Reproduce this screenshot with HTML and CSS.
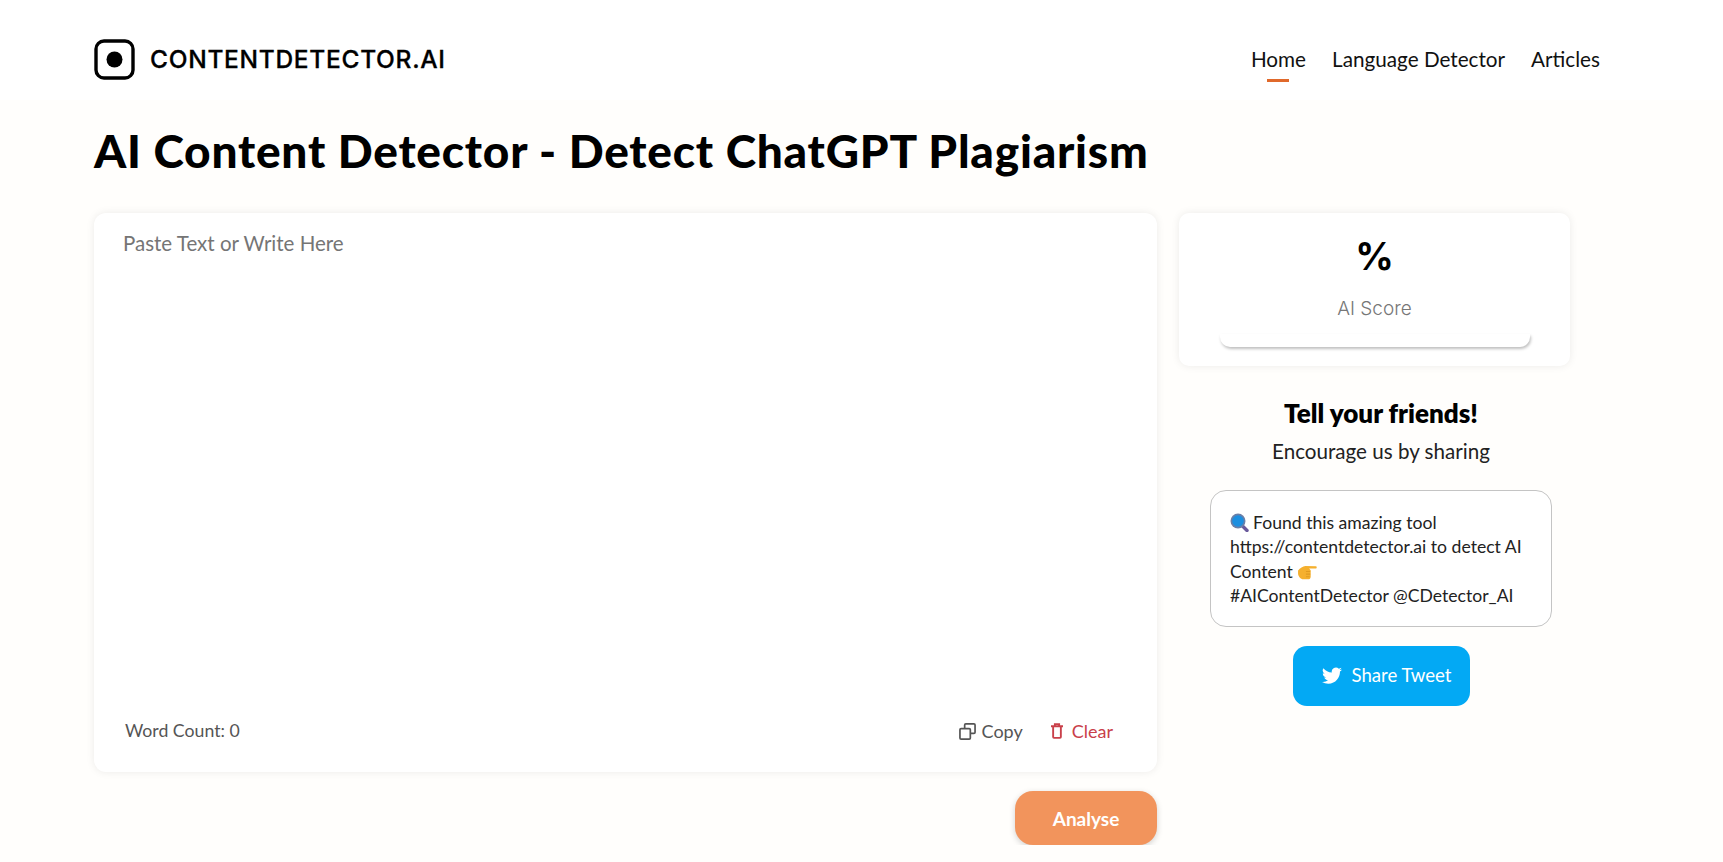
FILE: index.html
```html
<!DOCTYPE html>
<html lang="en">
<head>
  <meta charset="UTF-8" />
  <meta name="viewport" content="width=device-width, initial-scale=1.0"/>
  <title>AI Content Detector</title>
  <link rel="stylesheet" href="styles.css">
</head>
<body>

  <!-- Header -->
  <div class="header">
    <a class="logo" href="#">
      <svg class="logo-icon" width="41" height="41" viewBox="0 0 41 41">
        <rect x="2" y="2" width="37" height="37" rx="8" fill="none" stroke="#000" stroke-width="3.4"/>
        <circle cx="20.5" cy="20.5" r="8"/>
      </svg>
      <span class="logo-text">CONTENTDETECTOR.AI</span>
    </a>
    <div class="nav">
      <a class="nav-link active" href="#">Home</a>
      <a class="nav-link" href="#">Language Detector</a>
      <a class="nav-link" href="#">Articles</a>
    </div>
  </div>

  <div class="page">
    <h1 class="page-title">AI Content Detector - Detect ChatGPT Plagiarism</h1>

    <div class="columns">
      <!-- Editor -->
      <div class="left-col">
        <div class="editor-card">
          <textarea class="editor" placeholder="Paste Text or Write Here"></textarea>
          <div class="editor-footer">
            <span class="word-count">Word Count: 0</span>
            <div class="editor-actions">
              <a class="action copy" href="#">
                <svg width="17" height="17" viewBox="0 0 18 18" fill="none" stroke="currentColor" stroke-width="1.8">
                  <rect x="1" y="6" width="11" height="11" rx="1.2"/>
                  <path d="M6 6V2.2C6 1.5 6.5 1 7.2 1h8.6c.7 0 1.2.5 1.2 1.2v7.6c0 .7-.5 1.2-1.2 1.2H12"/>
                </svg>
                Copy
              </a>
              <a class="action clear" href="#">
                <svg width="12" height="16" viewBox="0 0 14 18" fill="none" stroke="currentColor" stroke-width="2.2">
                  <path d="M0 3.500h14M4.500 3V1h5v2"/>
                  <path d="M2.500 4v12c0 .6.4 1 1 1h7c.6 0 1-.4 1-1V4"/>
                </svg>
                Clear
              </a>
            </div>
          </div>
        </div>
        <div class="analyse-row">
          <button class="analyse-btn">Analyse</button>
        </div>
      </div>

      <!-- Score and sharing -->
      <div class="right-col">
        <div class="score-card">
          <div class="score-value">%</div>
          <div class="score-label">AI Score</div>
          <div class="score-bar"></div>
        </div>

        <div class="share">
          <h3>Tell your friends!</h3>
          <p class="share-sub">Encourage us by sharing</p>
          <div class="tweet-box">
            <svg class="emoji" width="19" height="19" viewBox="0 0 19 19">
              <path d="M11.500 12l5.500 5.500" stroke="#6a5a9c" stroke-width="3.400" stroke-linecap="round"/>
              <circle cx="8" cy="8" r="7.500" fill="#6a7fa8"/>
              <circle cx="8" cy="8" r="5.800" fill="#1c8fe0"/>
            </svg>Found this amazing tool https://contentdetector.ai to detect AI Content
            <svg class="emoji hand" width="20" height="18" viewBox="0 0 19 17">
              <path d="M1 7C3 4.500 5.500 3.200 8 2.800l10 .2c1 0 1 2.200 0 2.200h-6.500l1.500 1.600v6.200c0 1.500-1 2.500-2.500 2.500H6C3.500 15.500 1 12.500 1 10z" fill="#f5b02e"/>
              <path d="M8.500 8h4M8.500 10.500h4M8.500 13h3.500" stroke="#e09a20" stroke-width="1"/>
            </svg><br>
            #AIContentDetector @CDetector_AI
          </div>
          <a class="tweet-btn" href="#">
            <svg width="20" height="20" viewBox="0 0 16 16" fill="#fff">
              <path d="M5.026 15c6.038 0 9.341-5.003 9.341-9.334 0-.14 0-.282-.006-.422A6.685 6.685 0 0 0 16 3.542a6.658 6.658 0 0 1-1.889.518 3.301 3.301 0 0 0 1.447-1.817 6.533 6.533 0 0 1-2.087.793A3.286 3.286 0 0 0 7.875 6.030a9.325 9.325 0 0 1-6.767-3.429 3.289 3.289 0 0 0 1.018 4.382A3.323 3.323 0 0 1 .64 6.575v.045a3.288 3.288 0 0 0 2.632 3.218 3.203 3.203 0 0 1-.865.115 3.230 3.230 0 0 1-.614-.057 3.283 3.283 0 0 0 3.067 2.277A6.588 6.588 0 0 1 .78 13.580a6.320 6.320 0 0 1-.78-.045A9.344 9.344 0 0 0 5.026 15z"/>
            </svg>
            Share Tweet
          </a>
        </div>
      </div>
    </div>
  </div>

</body>
</html>
```

FILE: styles.css
```css
body {
  font-family: Lato, "Open Sans", sans-serif;
  margin: 0;
  padding: 0;
  background: #fffefc;
  color: #000;
  overflow: hidden;
}

a {
  text-decoration: none;
  color: inherit;
}

.header {
  height: 100px;
  background: #fff;
  display: flex;
  justify-content: space-between;
  align-items: center;
  padding: 0 123px 0 94px;
  box-sizing: border-box;
}

.logo {
  display: flex;
  align-items: center;
  gap: 15px;
  margin-top: 18px;
}

.logo-text {
  font-family: Inter, sans-serif;
  font-size: 24.500px;
  font-weight: 500;
  letter-spacing: 0.7px;
  -webkit-text-stroke: 0.3px #000;
}

.nav {
  display: flex;
  gap: 26px;
  margin-top: 18px;
}

.nav-link {
  position: relative;
  font-size: 20.700px;
  color: #111;
  line-height: 28px;
}

.nav-link.active::after {
  content: "";
  position: absolute;
  left: 16px;
  right: 17px;
  bottom: -9px;
  height: 3px;
  background: #e0692b;
}

.page {
  padding: 0 94px;
}

.page-title {
  font-size: 46px;
  font-weight: 900;
  letter-spacing: 0.78px;
  line-height: 60px;
  margin: 21px 0 32px;
}

.columns {
  display: flex;
  gap: 22px;
}

.left-col {
  width: 1063px;
}

.editor-card {
  height: 559px;
  background: #fff;
  border-radius: 12px;
  box-shadow: 0 0 8px rgba(0, 0, 0, 0.08);
  display: flex;
  flex-direction: column;
  box-sizing: border-box;
  padding: 17px 44px 28px 29px;
}

.editor {
  flex: 1;
  border: none;
  outline: none;
  resize: none;
  padding: 0;
  background: transparent;
  font-family: inherit;
  font-size: 20.500px;
  line-height: 26px;
}

.editor::placeholder {
  color: #757575;
}

.editor-footer {
  display: flex;
  justify-content: space-between;
  align-items: center;
  padding-left: 2px;
  font-size: 18px;
  line-height: 26px;
}

.word-count {
  color: #555;
  font-size: 17.700px;
}

.editor-actions {
  display: flex;
  gap: 28px;
}

.action {
  display: flex;
  align-items: center;
  gap: 6px;
}

.copy {
  color: #555;
}

.clear {
  color: #c9404a;
  gap: 9px;
}

.analyse-row {
  display: flex;
  justify-content: flex-end;
  margin-top: 19px;
}

.analyse-btn {
  width: 142px;
  height: 54px;
  border: none;
  border-radius: 18px;
  background: #f2945c;
  color: #fff;
  font-family: inherit;
  font-size: 19px;
  font-weight: 700;
  box-shadow: 0 2px 6px rgba(0, 0, 0, 0.18);
}

.right-col {
  width: 391px;
}

.score-card {
  height: 153px;
  background: #fff;
  border-radius: 10px;
  box-shadow: 0 0 8px rgba(0, 0, 0, 0.08);
  box-sizing: border-box;
  padding-top: 20px;
  text-align: center;
}

.score-value {
  font-family: Inter, sans-serif;
  font-size: 38px;
  font-weight: 700;
  line-height: 46px;
}

.score-label {
  font-family: Inter, sans-serif;
  font-size: 19px;
  font-weight: 300;
  color: #777;
  line-height: 26px;
  margin-top: 17px;
}

.score-bar {
  width: 310px;
  height: 13px;
  margin: 12px auto 0;
  background: #fff;
  border-radius: 0 0 10px 10px;
  box-shadow: 1px 2px 3px rgba(0, 0, 0, 0.25);
}

.share {
  margin-left: 31px;
  margin-right: 18px;
  text-align: center;
  margin-top: 32px;
}

.share h3 {
  font-size: 26px;
  font-weight: 800;
  line-height: 30px;
  margin: 0;
}

.share-sub {
  font-size: 20.600px;
  color: #222;
  line-height: 26px;
  margin: 10px 0 26px;
}

.tweet-box {
  border: 1px solid #c4c4c4;
  border-radius: 16px;
  background: #fff;
  text-align: left;
  font-size: 17.600px;
  line-height: 24.300px;
  color: #222;
  padding: 20px 19px 17px;
  height: 137px;
  box-sizing: border-box;
}

.emoji {
  vertical-align: -3px;
  margin-right: 4px;
}

.tweet-btn {
  display: flex;
  align-items: center;
  width: 177px;
  height: 60px;
  box-sizing: border-box;
  padding: 0 0 3px 29px;
  gap: 10px;
  margin: 19px auto 0;
  background: #03a9f4;
  border-radius: 14px;
  color: #fff;
  font-size: 18.600px;
}
```
